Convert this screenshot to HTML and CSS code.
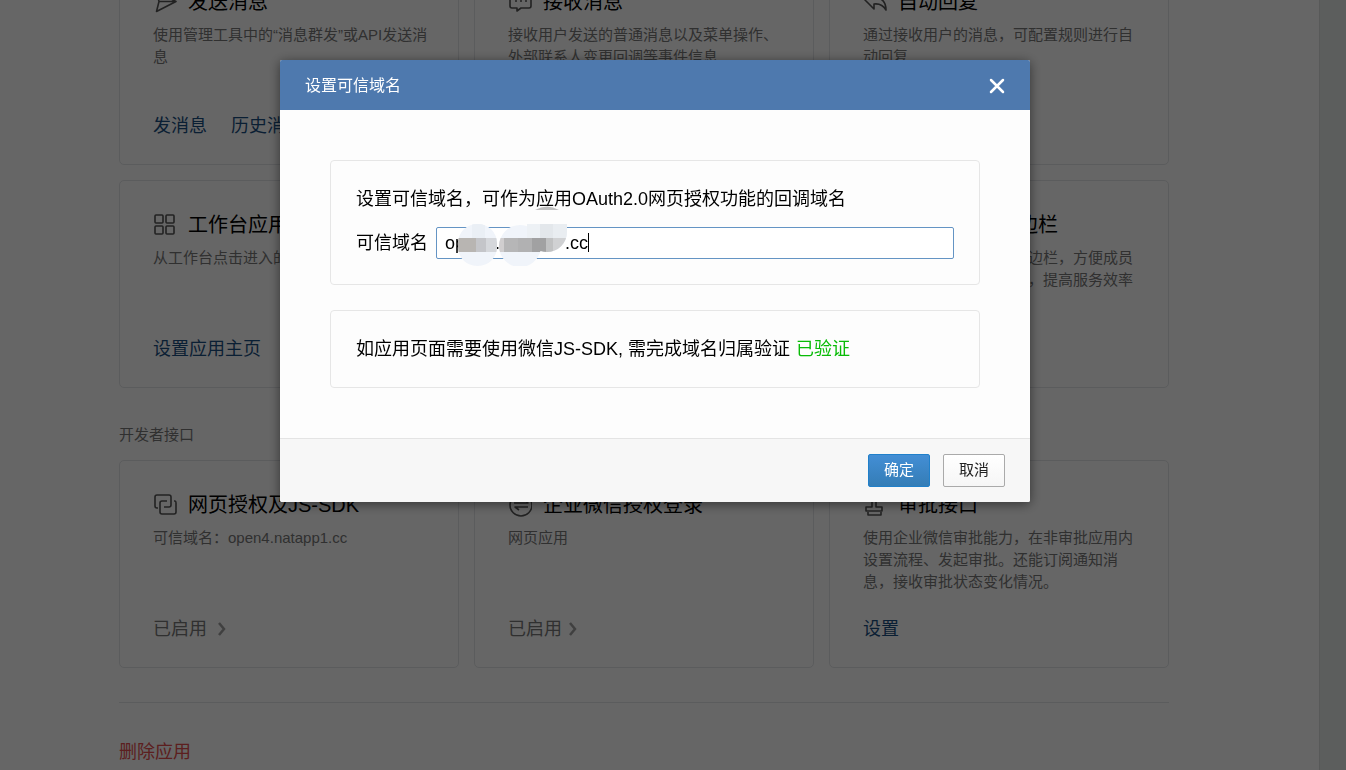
FILE: index.html
```
<!DOCTYPE html>
<html lang="zh-CN">
<head>
    <meta charset="UTF-8">
    <meta name="viewport" content="width=device-width, initial-scale=1.0">
    <title>设置可信域名</title>
    <link rel="stylesheet" href="styles.css">
</head>
<body>
    <main class="page">
        <section class="cards">
            <article class="card">
                <h3 class="card-title">
                    <svg class="icon" width="24" height="24" viewBox="0 0 24 24"><path d="M3.500 1.500L23 11.500L3.500 21.500L6 11.500ZM6 11.500H22"/></svg>
                    发送消息
                </h3>
                <p class="card-desc">使用管理工具中的“消息群发”或API发送消息</p>
                <div class="card-links"><a href="#">发消息</a><a href="#">历史消息</a></div>
            </article>
            <article class="card">
                <h3 class="card-title">
                    <svg class="icon" width="24" height="24" viewBox="0 0 24 24"><path d="M4 2H21Q23 2 23 4V16Q23 18 21 18H13L9 21V18H4Q2 18 2 16V4Q2 2 4 2Z"/><path d="M7 11H9M12 11H14M17 11H19"/></svg>
                    接收消息
                </h3>
                <p class="card-desc">接收用户发送的普通消息以及菜单操作、外部联系人变更回调等事件信息</p>
            </article>
            <article class="card">
                <h3 class="card-title">
                    <svg class="icon" width="24" height="24" viewBox="0 0 24 24"><path d="M11 2L2 10L11 19V14Q19 13 23 20Q23 8 11 7Z"/></svg>
                    自动回复
                </h3>
                <p class="card-desc">通过接收用户的消息，可配置规则进行自动回复</p>
            </article>

            <article class="card">
                <h3 class="card-title">
                    <svg class="icon" width="24" height="24" viewBox="0 0 24 24"><rect x="2" y="2" width="8" height="8" rx="1"/><rect x="13" y="2" width="8" height="8" rx="1"/><rect x="2" y="13" width="8" height="8" rx="1"/><rect x="13" y="13" width="8" height="8" rx="1"/></svg>
                    工作台应用主页
                </h3>
                <p class="card-desc">从工作台点击进入的应用主页</p>
                <div class="card-links"><a href="#">设置应用主页</a></div>
            </article>
            <article class="card">
                <h3 class="card-title">自定义菜单</h3>
            </article>
            <article class="card">
                <h3 class="card-title">
                    <svg class="icon" width="24" height="24" viewBox="0 0 24 24"><path d="M1 3H22V21H1ZM15 3V21"/></svg>
                    配置到聊天侧边栏
                </h3>
                <p class="card-desc">可配置应用页面到聊天侧边栏，方便成员在外部会话中查看和使用，提高服务效率</p>
            </article>
        </section>

        <h2 class="section-title">开发者接口</h2>
        <section class="cards">
            <article class="card">
                <h3 class="card-title">
                    <svg class="icon" width="24" height="24" viewBox="0 0 24 24"><path d="M5 15H4Q2 15 2 13V4Q2 2 4 2H16Q18 2 18 4V12Q18 14 16 14H11"/><path d="M21 8H22Q23 8 23 10V19Q23 21 21 21H9Q7 21 7 19V10Q7 8 9 8H14"/></svg>
                    网页授权及JS-SDK
                </h3>
                <p class="card-desc">可信域名：open4.natapp1.cc</p>
                <div class="card-links">
                    <a class="enabled" href="#">已启用 <svg class="arrow arrow-far" width="10" height="14" viewBox="0 0 10 14"><path d="M2 1L7 7L2 13"/></svg></a>
                </div>
            </article>
            <article class="card">
                <h3 class="card-title">
                    <svg class="icon" width="24" height="24" viewBox="0 0 24 24"><circle cx="13" cy="12" r="11"/><path d="M6 10H20L16 6M20 14H7L11 17"/></svg>
                    企业微信授权登录
                </h3>
                <p class="card-desc">网页应用</p>
                <div class="card-links">
                    <a class="enabled" href="#">已启用 <svg class="arrow" width="10" height="14" viewBox="0 0 10 14"><path d="M2 1L7 7L2 13"/></svg></a>
                </div>
            </article>
            <article class="card">
                <h3 class="card-title">
                    <svg class="icon" width="24" height="24" viewBox="0 0 24 24"><path d="M9 14V9Q6 2 11 2Q16 2 13 9V14H19V18H3V14ZM5 19V22H18V19"/></svg>
                    审批接口
                </h3>
                <p class="card-desc">使用企业微信审批能力，在非审批应用内设置流程、发起审批。还能订阅通知消息，接收审批状态变化情况。</p>
                <div class="card-links"><a href="#">设置</a></div>
            </article>
        </section>

        <div class="page-footer">
            <a class="delete" href="#">删除应用</a>
        </div>
    </main>

    <div class="overlay">
        <div class="dialog" role="dialog" aria-labelledby="dialog-title">
            <div class="dialog-head">
                <h1 class="dialog-title" id="dialog-title">设置可信域名</h1>
                <button type="button" class="close" aria-label="关闭">
                    <svg width="16" height="16" viewBox="0 0 16 16"><path d="M2 2L14 14M14 2L2 14"/></svg>
                </button>
            </div>
            <div class="dialog-body">
                <div class="box">
                    <p>设置可信域名，可作为应用OAuth2.0网页授权功能的回调域名</p>
                    <div class="field">
                        <label for="domain">可信域名</label>
                        <div class="field-input">
                            <input type="text" id="domain" value="open4.natapp1.cc">
                            <!-- mosaic over the domain, plus the text cursor -->
                            <svg class="mask" width="170" height="72" viewBox="0 0 170 72">
                                <defs>
                                    <clipPath id="blobs">
                                        <rect x="28" y="24" width="39" height="42" rx="19"/>
                                        <circle cx="90" cy="46" r="21"/>
                                        <path d="M97 24H137V32A20 20 0 0 1 97 32Z"/>
                                    </clipPath>
                                </defs>
                                <rect x="100" y="30" width="35" height="27" fill="#fff"/>
                                <path d="M105 10Q117 3 129 10Z" fill="#bfbfbf"/>
                                <g clip-path="url(#blobs)" shape-rendering="crispEdges">
                                    <rect x="28" y="24" width="109" height="42" fill="#f0f4fa"/>
                                    <rect x="42" y="24" width="13" height="14" fill="#eaeff5"/>
                                    <rect x="97" y="24" width="13" height="14" fill="#edf1f5"/>
                                    <rect x="110" y="24" width="13" height="14" fill="#e3e7eb"/>
                                    <rect x="123" y="24" width="14" height="14" fill="#e9edf1"/>
                                    <rect x="28" y="38" width="18" height="14" fill="#b8b5b2"/>
                                    <rect x="46" y="38" width="10" height="14" fill="#c4c5c9"/>
                                    <rect x="56" y="38" width="12" height="14" fill="#d5d7db"/>
                                    <rect x="69" y="38" width="5" height="14" fill="#d0cecf"/>
                                    <rect x="74" y="38" width="14" height="14" fill="#b6b6b7"/>
                                    <rect x="88" y="38" width="14" height="14" fill="#b1b1b2"/>
                                    <rect x="102" y="38" width="14" height="14" fill="#a1a1a2"/>
                                    <rect x="116" y="38" width="7" height="14" fill="#c0c1c2"/>
                                    <rect x="123" y="38" width="14" height="14" fill="#d0d1d3"/>
                                </g>
                                <rect x="158" y="33" width="1" height="19" fill="#000"/>
                            </svg>
                        </div>
                    </div>
                </div>
                <div class="box">
                    <p>如应用页面需要使用微信JS-SDK, 需完成域名归属验证<span class="verified">已验证</span></p>
                </div>
            </div>
            <div class="dialog-foot">
                <button type="button" class="btn btn-primary">确定</button>
                <button type="button" class="btn">取消</button>
            </div>
        </div>
    </div>
</body>
</html>
```

FILE: styles.css
```
* {
    box-sizing: border-box;
}
html {
    height: 100%;
    overflow: hidden;
    background: #e6ebe9;
}
body {
    margin: 0;
    height: 100%;
    overflow: hidden;
    font-family: "Liberation Sans", "Noto Sans CJK SC", sans-serif;
    font-size: 18px;
    line-height: 26px;
    color: #000;
}
h1, h2, h3, p {
    margin: 0;
    font-weight: normal;
}
a {
    text-decoration: none;
    color: #1b4f82;
}

/* page behind the dialog, scrolled down a little */
.page {
    min-height: calc(100% + 43px);
    margin-top: -43px;
    margin-right: 26px;
    padding: 0 150px 0 119px;
    background: #fff;
    border-right: 1px solid #dcdfde;
}
.cards {
    display: grid;
    grid-template-columns: repeat(3, 1fr);
    gap: 15px;
}
.card {
    display: flex;
    flex-direction: column;
    height: 208px;
    padding: 30px 28px 25px 33px;
    border: 1px solid #e4e6e9;
    border-radius: 5px;
}
.card-title {
    display: flex;
    align-items: center;
    gap: 11px;
    font-size: 20px;
    line-height: 28px;
    white-space: nowrap;
}
.card-desc {
    margin-top: 8px;
    font-size: 15px;
    line-height: 22px;
    color: #787878;
}
.card-links {
    display: flex;
    gap: 24px;
    margin-top: auto;
    white-space: nowrap;
}
.icon {
    flex: none;
    fill: none;
    stroke: #555;
    stroke-width: 1.6;
    stroke-linejoin: round;
}
.enabled {
    display: flex;
    align-items: center;
    gap: 6px;
    color: #787878;
}
.arrow {
    fill: none;
    stroke: #a0a0a0;
    stroke-width: 2.5;
}
.arrow-far {
    margin-left: 4px;
}
.section-title {
    margin: 36px 0 14px;
    font-size: 15px;
    line-height: 22px;
    color: #787878;
}
.page-footer {
    margin-top: 34px;
    padding-top: 36px;
    border-top: 1px solid #e4e6e9;
}
.delete {
    color: #e64e4e;
}

.overlay {
    position: fixed;
    inset: 0;
    padding: 60px 36px 0 0;
    background: rgba(0, 0, 0, 0.6);
}
.dialog {
    max-width: 750px;
    margin: 0 auto;
    background: #fdfdfd;
    border-radius: 2px;
    box-shadow: 0 2px 12px rgba(0, 0, 0, 0.5);
    overflow: hidden;
}
.dialog-head {
    display: flex;
    align-items: center;
    justify-content: space-between;
    height: 50px;
    padding: 2px 25px 0;
    background: #4e79ae;
    color: #fff;
}
.dialog-title {
    font-size: 16px;
}
.close {
    display: flex;
    padding: 0;
    border: none;
    background: none;
    cursor: pointer;
}
.close svg {
    fill: none;
    stroke: #fff;
    stroke-width: 2.5;
    stroke-linecap: round;
}
.dialog-body {
    display: flex;
    flex-direction: column;
    gap: 25px;
    padding: 50px;
}
.box {
    padding: 25px;
    border: 1px solid #e6e6e6;
    border-radius: 4px;
}
.field {
    display: flex;
    align-items: center;
    gap: 8px;
    margin-top: 15px;
}
.field-input {
    position: relative;
    flex: 1;
}
.field-input input {
    display: block;
    width: 100%;
    height: 32px;
    padding: 0 8px;
    border: 1px solid #6494c4;
    border-radius: 2px;
    background: #fff;
    font-family: inherit;
    font-size: 18px;
    color: #000;
    outline: none;
}
.mask {
    position: absolute;
    top: -27px;
    left: -6px;
    pointer-events: none;
}
.verified {
    margin-left: 6px;
    color: #09bb07;
}
.dialog-foot {
    display: flex;
    justify-content: flex-end;
    gap: 13px;
    padding: 15px 25px;
    border-top: 1px solid #e4e4e4;
    background: #f7f7f7;
}
.btn {
    padding: 4px 15px 5px;
    border: 1px solid #aaa;
    border-radius: 2px;
    background: linear-gradient(#fff, #f6f6f6);
    font-family: inherit;
    font-size: 15px;
    line-height: 22px;
    color: #222;
    cursor: pointer;
}
.btn-primary {
    border-color: #2080ca;
    background: linear-gradient(#438ed5, #347db6);
    color: #fff;
}
```
